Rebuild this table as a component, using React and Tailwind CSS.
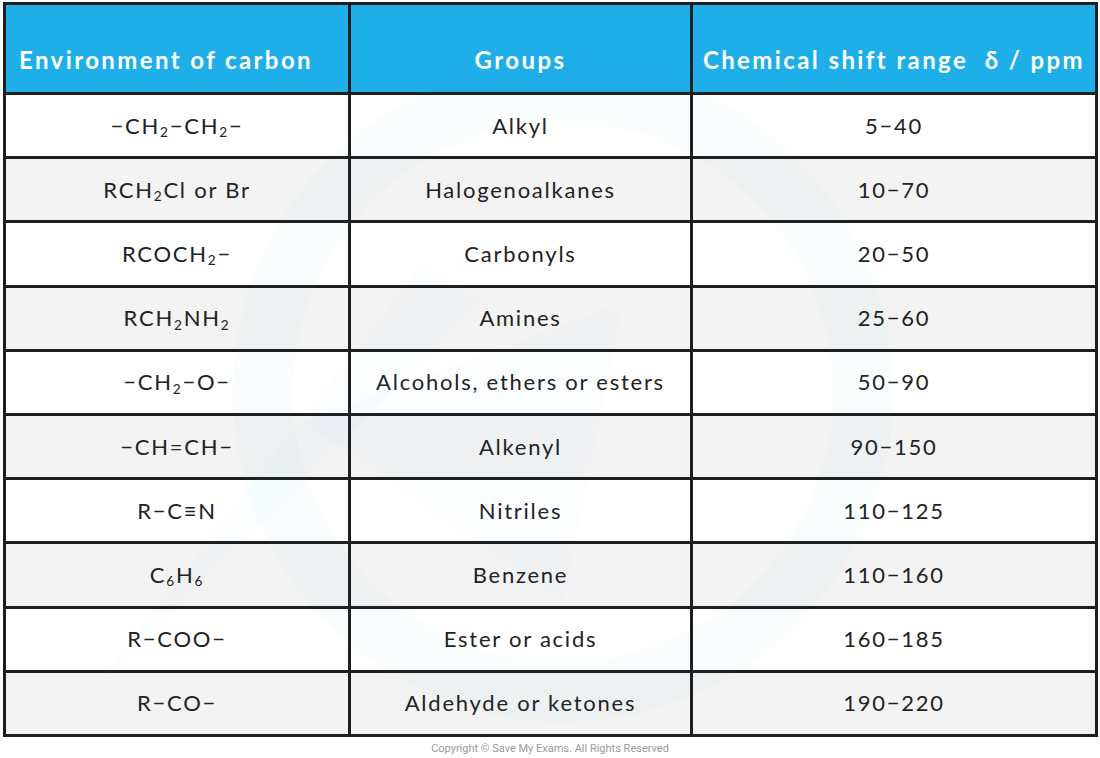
import React from "react";

const Sub = ({ children }) => <sub className="text-[0.62em]">{children}</sub>;

const rows = [
  { env: <>−CH<Sub>2</Sub>−CH<Sub>2</Sub>−</>, group: "Alkyl", shift: "5−40" },
  { env: <>RCH<Sub>2</Sub>Cl or Br</>, group: "Halogenoalkanes", shift: "10−70" },
  { env: <>RCOCH<Sub>2</Sub>−</>, group: "Carbonyls", shift: "20−50" },
  { env: <>RCH<Sub>2</Sub>NH<Sub>2</Sub></>, group: "Amines", shift: "25−60" },
  { env: <>−CH<Sub>2</Sub>−O−</>, group: "Alcohols, ethers or esters", shift: "50−90" },
  { env: "−CH=CH−", group: "Alkenyl", shift: "90−150" },
  { env: "R−C≡N", group: "Nitriles", shift: "110−125" },
  { env: <>C<Sub>6</Sub>H<Sub>6</Sub></>, group: "Benzene", shift: "110−160" },
  { env: "R−COO−", group: "Ester or acids", shift: "160−185" },
  { env: "R−CO−", group: "Aldehyde or ketones", shift: "190−220" },
];

const HeadCell = ({ children, className = "" }) => (
  <div
    className={`bg-[#1eaee8] text-white font-bold text-[24px] tracking-[0.1em] flex items-end justify-center pb-[20px] leading-none ${className}`}
  >
    {children}
  </div>
);

const Cell = ({ children, shade }) => (
  <div
    className={`${
      shade ? "bg-[#f3f3f3]" : "bg-white"
    } text-[#222] text-[22px] tracking-[0.08em] flex items-center justify-center leading-none`}
  >
    <span>{children}</span>
  </div>
);

// faint logo watermark lying over the table
const Watermark = () => (
  <svg
    className="absolute inset-0 pointer-events-none"
    width="1095"
    height="735"
    viewBox="0 0 1095 735"
  >
    <circle
      cx="560"
      cy="390"
      r="300"
      fill="none"
      stroke="#1eaee8"
      strokeOpacity="0.025"
      strokeWidth="60"
    />
    <g fill="#1eaee8" fillOpacity="0.02">
      <polygon points="300,420 620,300 560,600" />
      <polygon points="80,700 420,260 480,300" />
    </g>
  </svg>
);

export default function App() {
  return (
    <div
      className="w-[1100px] h-[758px] bg-white pt-[2px] pl-[3px]"
      style={{ fontFamily: "Lato, 'Noto Sans', sans-serif" }}
    >
      <div className="relative w-[1095px] h-[735px] bg-[#1e1e1e] p-[3px] grid grid-cols-[342px_339px_402px] grid-rows-[87px_repeat(10,minmax(0,1fr))] gap-[3px]">
        <HeadCell className="pr-[22px]">Environment of carbon</HeadCell>
        <HeadCell>Groups</HeadCell>
        <HeadCell>Chemical shift range&nbsp;&nbsp;δ / ppm</HeadCell>
        {rows.map((r, i) => (
          <React.Fragment key={i}>
            <Cell shade={i % 2 === 1}>{r.env}</Cell>
            <Cell shade={i % 2 === 1}>{r.group}</Cell>
            <Cell shade={i % 2 === 1}>{r.shift}</Cell>
          </React.Fragment>
        ))}
        <Watermark />
      </div>
      <p
        className="text-center text-[11px] text-[#9a9a9a] mt-[4px] pr-[3px]"
        style={{ fontFamily: "'Liberation Sans Narrow', Roboto, sans-serif" }}
      >
        Copyright © Save My Exams. All Rights Reserved
      </p>
    </div>
  );
}
